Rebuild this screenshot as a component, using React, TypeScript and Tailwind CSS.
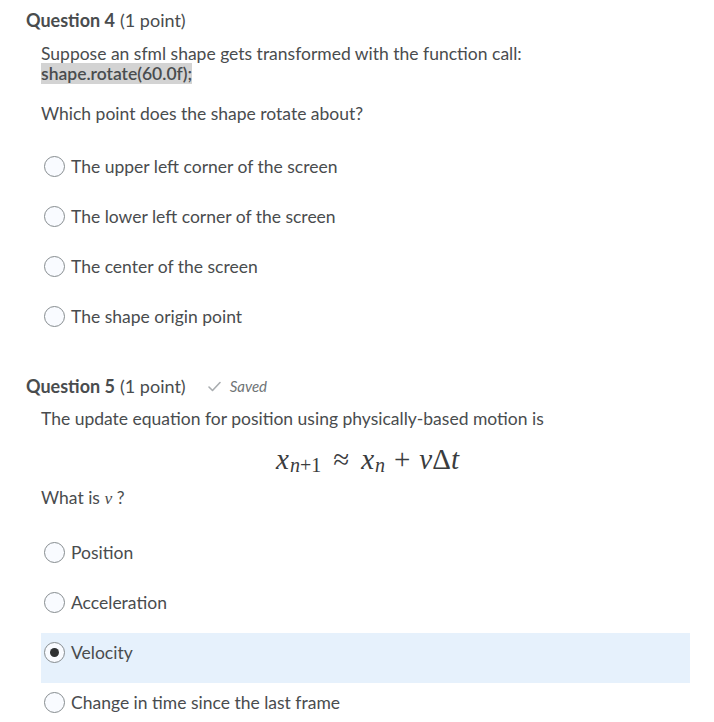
import React from "react";

const Radio = ({ checked }: { checked?: boolean }) => (
  <span className="flex h-[21px] w-[21px] shrink-0 items-center justify-center rounded-full border border-[#868c8f] bg-[#f9fbff]">
    {checked && <span className="h-[9px] w-[9px] rounded-full bg-[#2f3133]" />}
  </span>
);

const Option = ({ label, checked }: { label: string; checked?: boolean }) => (
  <div className={`h-[50px] pl-[3px] pt-[9px] ${checked ? "bg-[#e6f1fc]" : ""}`}>
    <div className="flex h-[21px] items-center gap-[6px]">
      <Radio checked={checked} />
      <span className="text-[17.5px] leading-[20px]">{label}</span>
    </div>
  </div>
);

export default function App() {
  return (
    <div
      className="min-h-[722px] w-[714px] bg-white pl-[26px] pr-[24px] text-[#494c4e]"
      style={{ fontFamily: "Lato, 'Open Sans', sans-serif" }}
    >
      <div className="pt-[8px]">
        <div className="flex h-[24px] items-center text-[18px]">
          <span className="font-bold">Question 4</span>
          <span className="ml-[5px]">(1 point)</span>
        </div>
      </div>
      <div className="ml-[15px]">
        <div className="mt-[12px] text-[17.5px] leading-[20px]">
          <div>Suppose an sfml shape gets transformed with the function call:</div>
          <div>
            <span className="bg-[#d3d3d3] font-semibold">shape.rotate(60.0f);</span>
          </div>
        </div>
        <div className="mt-[20px] text-[17.5px] leading-[20px]">Which point does the shape rotate about?</div>
        <div className="mt-[23px]">
          <Option label="The upper left corner of the screen" />
          <Option label="The lower left corner of the screen" />
          <Option label="The center of the screen" />
          <Option label="The shape origin point" />
        </div>
      </div>

      <div className="mt-[27px] flex h-[24px] items-center text-[18px]">
        <span className="font-bold">Question 5</span>
        <span className="ml-[5px]">(1 point)</span>
        <span className="ml-[22px] flex items-center gap-[9px] text-[15px] italic text-[#6e7376]">
          <svg width="13" height="11" viewBox="0 0 13 11" fill="none">
            <path d="M1 6 L4.5 9.5 L12 1.5" stroke="#a9adb0" strokeWidth="1.6" strokeLinecap="round" strokeLinejoin="round" />
          </svg>
          Saved
        </span>
      </div>
      <div className="ml-[15px]">
        <div className="mt-[11px] text-[17.5px] leading-[20px]">
          The update equation for position using physically-based motion is
        </div>
        <div
          className="mt-[11px] flex h-[40px] items-center justify-center pl-[4px] text-[29px] text-[#3a3c3e]"
          style={{ fontFamily: "'Liberation Serif', serif" }}
        >
          <span className="italic">x</span>
          <span className="ml-[1px] mt-[10px] text-[20px]">
            <span className="italic">n</span>+1
          </span>
          <span className="mx-[12px]">≈</span>
          <span className="italic">x</span>
          <span className="ml-[1px] mt-[10px] text-[20px] italic">n</span>
          <span className="mx-[9px]">+</span>
          <span className="italic">v</span>
          <span>Δ</span>
          <span className="italic">t</span>
        </div>
        <div className="mt-[8px] text-[17.5px] leading-[20px]">
          What is{" "}
          <span className="italic" style={{ fontFamily: "'Liberation Serif', serif" }}>
            v
          </span>{" "}
          ?
        </div>
        <div className="mt-[25px]">
          <Option label="Position" />
          <Option label="Acceleration" />
          <Option label="Velocity" checked />
          <Option label="Change in time since the last frame" />
        </div>
      </div>
    </div>
  );
}
